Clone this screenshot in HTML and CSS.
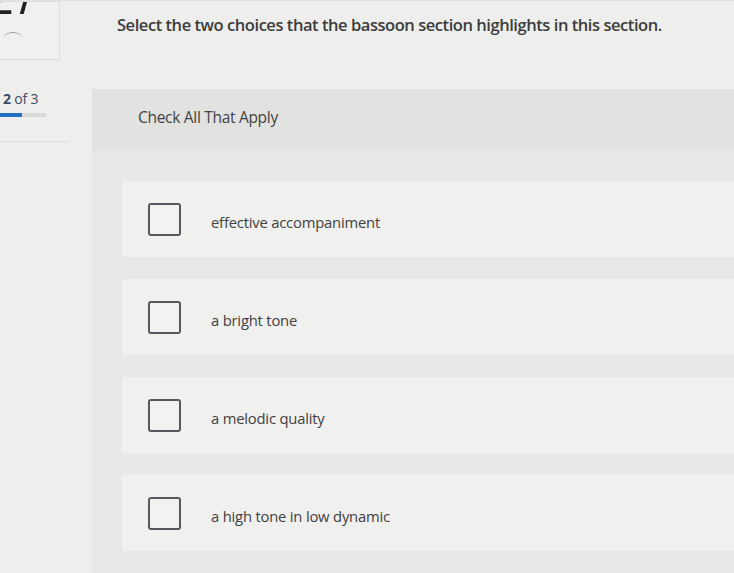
FILE: index.html
```html
<!DOCTYPE html>
<html>
<head>
<meta charset="utf-8">
<link rel="stylesheet" href="styles.css">
</head>
<body>
<div class="page">
  <div class="top">
    <div class="thumb"><span class="thumb-num">2/</span><span class="thumb-curve"></span></div>
    <div class="question">Select the two choices that the bassoon section highlights in this section.</div>
  </div>
  <div class="body">
    <aside class="side">
      <div class="count"><b>2</b> of 3</div>
      <div class="progress"><div class="progress-fill" style="width:48%"></div></div>
      <div class="side-line"></div>
    </aside>
    <main class="panel">
      <div class="panel-head">Check All That Apply</div>
      <div class="options">
        <label class="option"><span class="box"></span><span class="label">effective accompaniment</span></label>
        <label class="option"><span class="box"></span><span class="label">a bright tone</span></label>
        <label class="option"><span class="box"></span><span class="label">a melodic quality</span></label>
        <label class="option"><span class="box"></span><span class="label">a high tone in low dynamic</span></label>
      </div>
    </main>
  </div>
</div>
</body>
</html>
```
FILE: styles.css
```css
html, body { margin: 0; padding: 0; }
body {
  background: #eeeeec;
  font-family: "Open Sans", "Liberation Sans", sans-serif;
  color: #3d3d3d;
  width: 734px;
  height: 573px;
  overflow: hidden;
}
.page { display: flex; flex-direction: column; }
.top {
  display: flex;
  align-items: flex-start;
  height: 88px;
  border-top: 1px solid #e2e2e0;
}
.thumb {
  width: 60px;
  height: 59px;
  box-sizing: border-box;
  border: 1px solid #dcdcda;
  border-left: none;
  background: #f0f0ee;
  position: relative;
  overflow: hidden;
}
.thumb-num {
  position: absolute;
  top: -30px;
  left: -14px;
  font-size: 50px;
  line-height: 50px;
  font-family: "Liberation Sans", sans-serif;
  color: #222;
  letter-spacing: 6px;
}
.thumb-curve {
  position: absolute;
  top: 30px;
  left: 4px;
  width: 18px;
  height: 10px;
  border-top: 1px solid #9a9a98;
  border-radius: 50% 50% 0 0;
}
.question {
  margin-left: 57px;
  margin-top: 12px;
  font-size: 16.5px;
  font-weight: 600;
  letter-spacing: -0.45px;
  color: #3c3c3c;
}
.body { display: flex; }
.side {
  width: 92px;
  flex: none;
}
.count {
  font-size: 14px;
  color: #3e4a66;
  margin-left: 3px;
  letter-spacing: -0.2px;
}
.count b { font-weight: 700; }
.progress {
  margin-top: 5px;
  width: 46px;
  height: 4px;
  background: #dadad8;
}
.progress-fill { height: 100%; background: #2371c2; }
.side-line {
  margin-top: 24px;
  width: 68px;
  height: 1px;
  background: #dedede;
}
.panel {
  flex: 1;
  background: #e8e8e6;
  height: 485px;
}
.panel-head {
  height: 62px;
  background: #e2e2e0;
  box-sizing: border-box;
  padding-left: 46px;
  padding-top: 17px;
  font-size: 15.5px;
  color: #424242;
  letter-spacing: -0.3px;
}
.options {
  display: flex;
  flex-direction: column;
  gap: 22px;
  padding: 30px 0 0 30px;
}
.option {
  height: 76px;
  background: #f0f0ee;
  display: flex;
  align-items: center;
  padding-left: 26px;
  gap: 30px;
}
.box {
  width: 33px;
  height: 33px;
  box-sizing: border-box;
  border: 2px solid #55585e;
  border-radius: 3px;
  background: #f2f2f0;
  flex: none;
}
.label {
  font-size: 14.8px;
  color: #414141;
  letter-spacing: -0.2px;
  margin-top: 6px;
}
```
